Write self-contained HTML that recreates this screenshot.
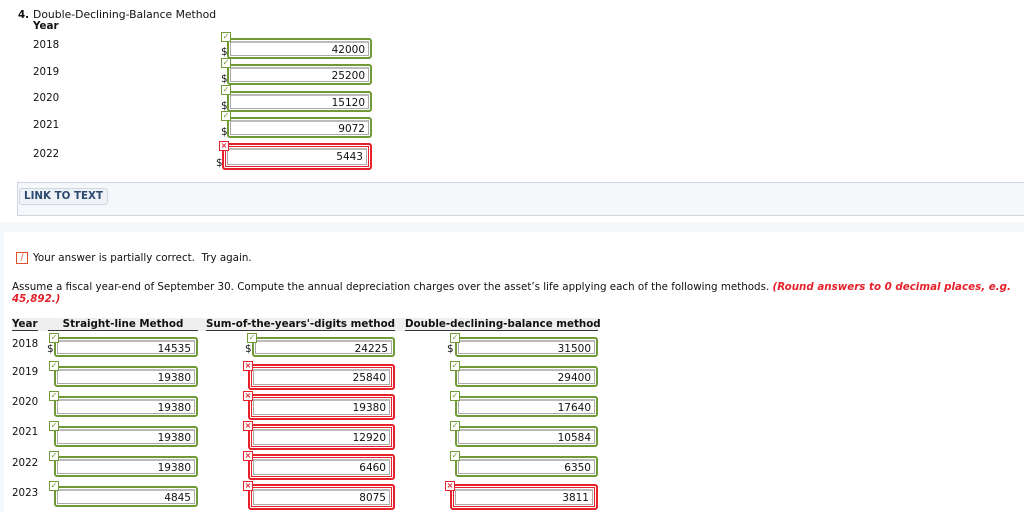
<!DOCTYPE html>
<html><head><meta charset="utf-8"><style>
*{margin:0;padding:0}
body{width:1024px;height:512px;position:relative;overflow:hidden;background:#fff;font-family:"DejaVu Sans","Liberation Sans",sans-serif;font-size:10.3px;color:#111}
.a{position:absolute;white-space:nowrap}
.b{position:absolute;box-sizing:border-box;border:2px solid #6f9a35;border-radius:3px;background:#fff}
.b .i{position:absolute;left:1px;right:1px;top:1px;bottom:1px;border:1px solid #aaa;border-top:2px solid #bbb;text-align:right;padding-right:3px;font-size:10.5px;line-height:15px}
.r{border-color:#e5222b;box-shadow:inset 0 0 0 1px #fff,inset 0 0 0 2px #e5222b}
.r .i{left:3px;right:3px;top:3px;bottom:3px}
.c{position:absolute;width:10px;height:10px;box-sizing:border-box;border:1px solid #6f9a35;background:#fff;color:#6f9a35;font-size:8px;line-height:8px;text-align:center}
.x{border-color:#e5222b;color:#e5222b;font-weight:bold}
.bd{font-weight:bold}
</style></head><body>
<div class="a bd" style="left:18px;top:9px">4.</div>
<div class="a" style="left:33px;top:8px;font-size:10.8px">Double-Declining-Balance Method</div>
<div class="a bd" style="left:33px;top:20px">Year</div>
<div class="a" style="left:33px;top:39px">2018</div>
<div class="a" style="left:33px;top:66px">2019</div>
<div class="a" style="left:33px;top:92px">2020</div>
<div class="a" style="left:33px;top:119px">2021</div>
<div class="a" style="left:33px;top:148px">2022</div>

<div class="b" style="left:227px;top:38px;width:145px;height:21px"><div class="i">42000</div></div><div class="c" style="left:221px;top:32px">✓</div><div class="a" style="left:221px;top:46px">$</div>
<div class="b" style="left:227px;top:64px;width:145px;height:21px"><div class="i">25200</div></div><div class="c" style="left:221px;top:58px">✓</div><div class="a" style="left:221px;top:73px">$</div>
<div class="b" style="left:227px;top:91px;width:145px;height:21px"><div class="i">15120</div></div><div class="c" style="left:221px;top:85px">✓</div><div class="a" style="left:221px;top:100px">$</div>
<div class="b" style="left:227px;top:117px;width:145px;height:21px"><div class="i">9072</div></div><div class="c" style="left:221px;top:111px">✓</div><div class="a" style="left:221px;top:126px">$</div>
<div class="b r" style="left:222px;top:143px;width:150px;height:27px"><div class="i">5443</div></div><div class="c x" style="left:219px;top:141px">×</div><div class="a" style="left:216px;top:157px">$</div>

<div class="a" style="left:17px;top:182px;width:1010px;height:34px;box-sizing:border-box;border:1px solid #cfd6e0;background:#f5f8fb"></div>
<div class="a bd" style="left:19px;top:188px;width:89px;height:17px;box-sizing:border-box;border:1px solid #cfd6e0;border-radius:3px;background:#eef2f7;color:#2c4a70;font-size:10.3px;line-height:15px;text-align:center">LINK TO TEXT</div>
<div class="a" style="left:0;top:222px;width:1024px;height:10px;background:#f5f8fb"></div>
<div class="a" style="left:0;top:232px;width:4px;height:280px;background:#f5f8fb"></div>

<div class="a" style="left:16px;top:252px;width:12px;height:12px;box-sizing:border-box;border:1px solid #e0522b;color:#e0522b;font-size:9px;line-height:10px;text-align:center">/</div>
<div class="a" style="left:33px;top:252px">Your answer is partially correct.&nbsp; Try again.</div>
<div class="a" style="left:12px;top:281px">Assume a fiscal year-end of September 30. Compute the annual depreciation charges over the asset’s life applying each of the following methods. <b style="color:#e5222b;font-style:italic">(Round answers to 0 decimal places, e.g.</b></div>
<div class="a bd" style="left:12px;top:293px;color:#e5222b;font-style:italic">45,892.)</div>

<div class="a" style="left:12px;top:318px;width:586px;height:13px;background:#efefef"></div>
<div class="a bd" style="left:12px;top:318px;width:26px;border-bottom:1px solid #333;line-height:12px">Year</div>
<div class="a bd" style="left:48px;top:318px;width:150px;border-bottom:1px solid #333;line-height:12px;text-align:center">Straight-line Method</div>
<div class="a bd" style="left:206px;top:318px;width:189px;border-bottom:1px solid #333;line-height:12px;text-align:center">Sum-of-the-years'-digits method</div>
<div class="a bd" style="left:405px;top:318px;width:193px;border-bottom:1px solid #333;line-height:12px;text-align:center">Double-declining-balance method</div>

<div class="a" style="left:12px;top:338px">2018</div>
<div class="a" style="left:12px;top:366px">2019</div>
<div class="a" style="left:12px;top:396px">2020</div>
<div class="a" style="left:12px;top:426px">2021</div>
<div class="a" style="left:12px;top:457px">2022</div>
<div class="a" style="left:12px;top:487px">2023</div>

<div class="b" style="left:54px;top:337px;width:144px;height:20px"><div class="i" style="line-height:14px">14535</div></div><div class="c" style="left:49px;top:333px">✓</div><div class="a" style="left:47px;top:343px">$</div>
<div class="b" style="left:54px;top:366px;width:144px;height:21px"><div class="i">19380</div></div><div class="c" style="left:49px;top:361px">✓</div>
<div class="b" style="left:54px;top:396px;width:144px;height:21px"><div class="i">19380</div></div><div class="c" style="left:49px;top:391px">✓</div>
<div class="b" style="left:54px;top:426px;width:144px;height:21px"><div class="i">19380</div></div><div class="c" style="left:49px;top:421px">✓</div>
<div class="b" style="left:54px;top:456px;width:144px;height:21px"><div class="i">19380</div></div><div class="c" style="left:49px;top:451px">✓</div>
<div class="b" style="left:54px;top:486px;width:144px;height:21px"><div class="i">4845</div></div><div class="c" style="left:49px;top:481px">✓</div>

<div class="b" style="left:252px;top:337px;width:143px;height:20px"><div class="i" style="line-height:14px">24225</div></div><div class="c" style="left:247px;top:333px">✓</div><div class="a" style="left:245px;top:343px">$</div>
<div class="b r" style="left:248px;top:364px;width:147px;height:26px"><div class="i">25840</div></div><div class="c x" style="left:243px;top:361px">×</div>
<div class="b r" style="left:248px;top:394px;width:147px;height:26px"><div class="i">19380</div></div><div class="c x" style="left:243px;top:391px">×</div>
<div class="b r" style="left:248px;top:424px;width:147px;height:26px"><div class="i">12920</div></div><div class="c x" style="left:243px;top:421px">×</div>
<div class="b r" style="left:248px;top:454px;width:147px;height:26px"><div class="i">6460</div></div><div class="c x" style="left:243px;top:451px">×</div>
<div class="b r" style="left:248px;top:484px;width:147px;height:26px"><div class="i">8075</div></div><div class="c x" style="left:243px;top:481px">×</div>

<div class="b" style="left:455px;top:337px;width:143px;height:20px"><div class="i" style="line-height:14px">31500</div></div><div class="c" style="left:450px;top:333px">✓</div><div class="a" style="left:447px;top:343px">$</div>
<div class="b" style="left:455px;top:366px;width:143px;height:21px"><div class="i">29400</div></div><div class="c" style="left:450px;top:361px">✓</div>
<div class="b" style="left:455px;top:396px;width:143px;height:21px"><div class="i">17640</div></div><div class="c" style="left:450px;top:391px">✓</div>
<div class="b" style="left:455px;top:426px;width:143px;height:21px"><div class="i">10584</div></div><div class="c" style="left:450px;top:421px">✓</div>
<div class="b" style="left:455px;top:456px;width:143px;height:21px"><div class="i">6350</div></div><div class="c" style="left:450px;top:451px">✓</div>
<div class="b r" style="left:450px;top:484px;width:148px;height:26px"><div class="i">3811</div></div><div class="c x" style="left:445px;top:481px">×</div>
</body></html>
